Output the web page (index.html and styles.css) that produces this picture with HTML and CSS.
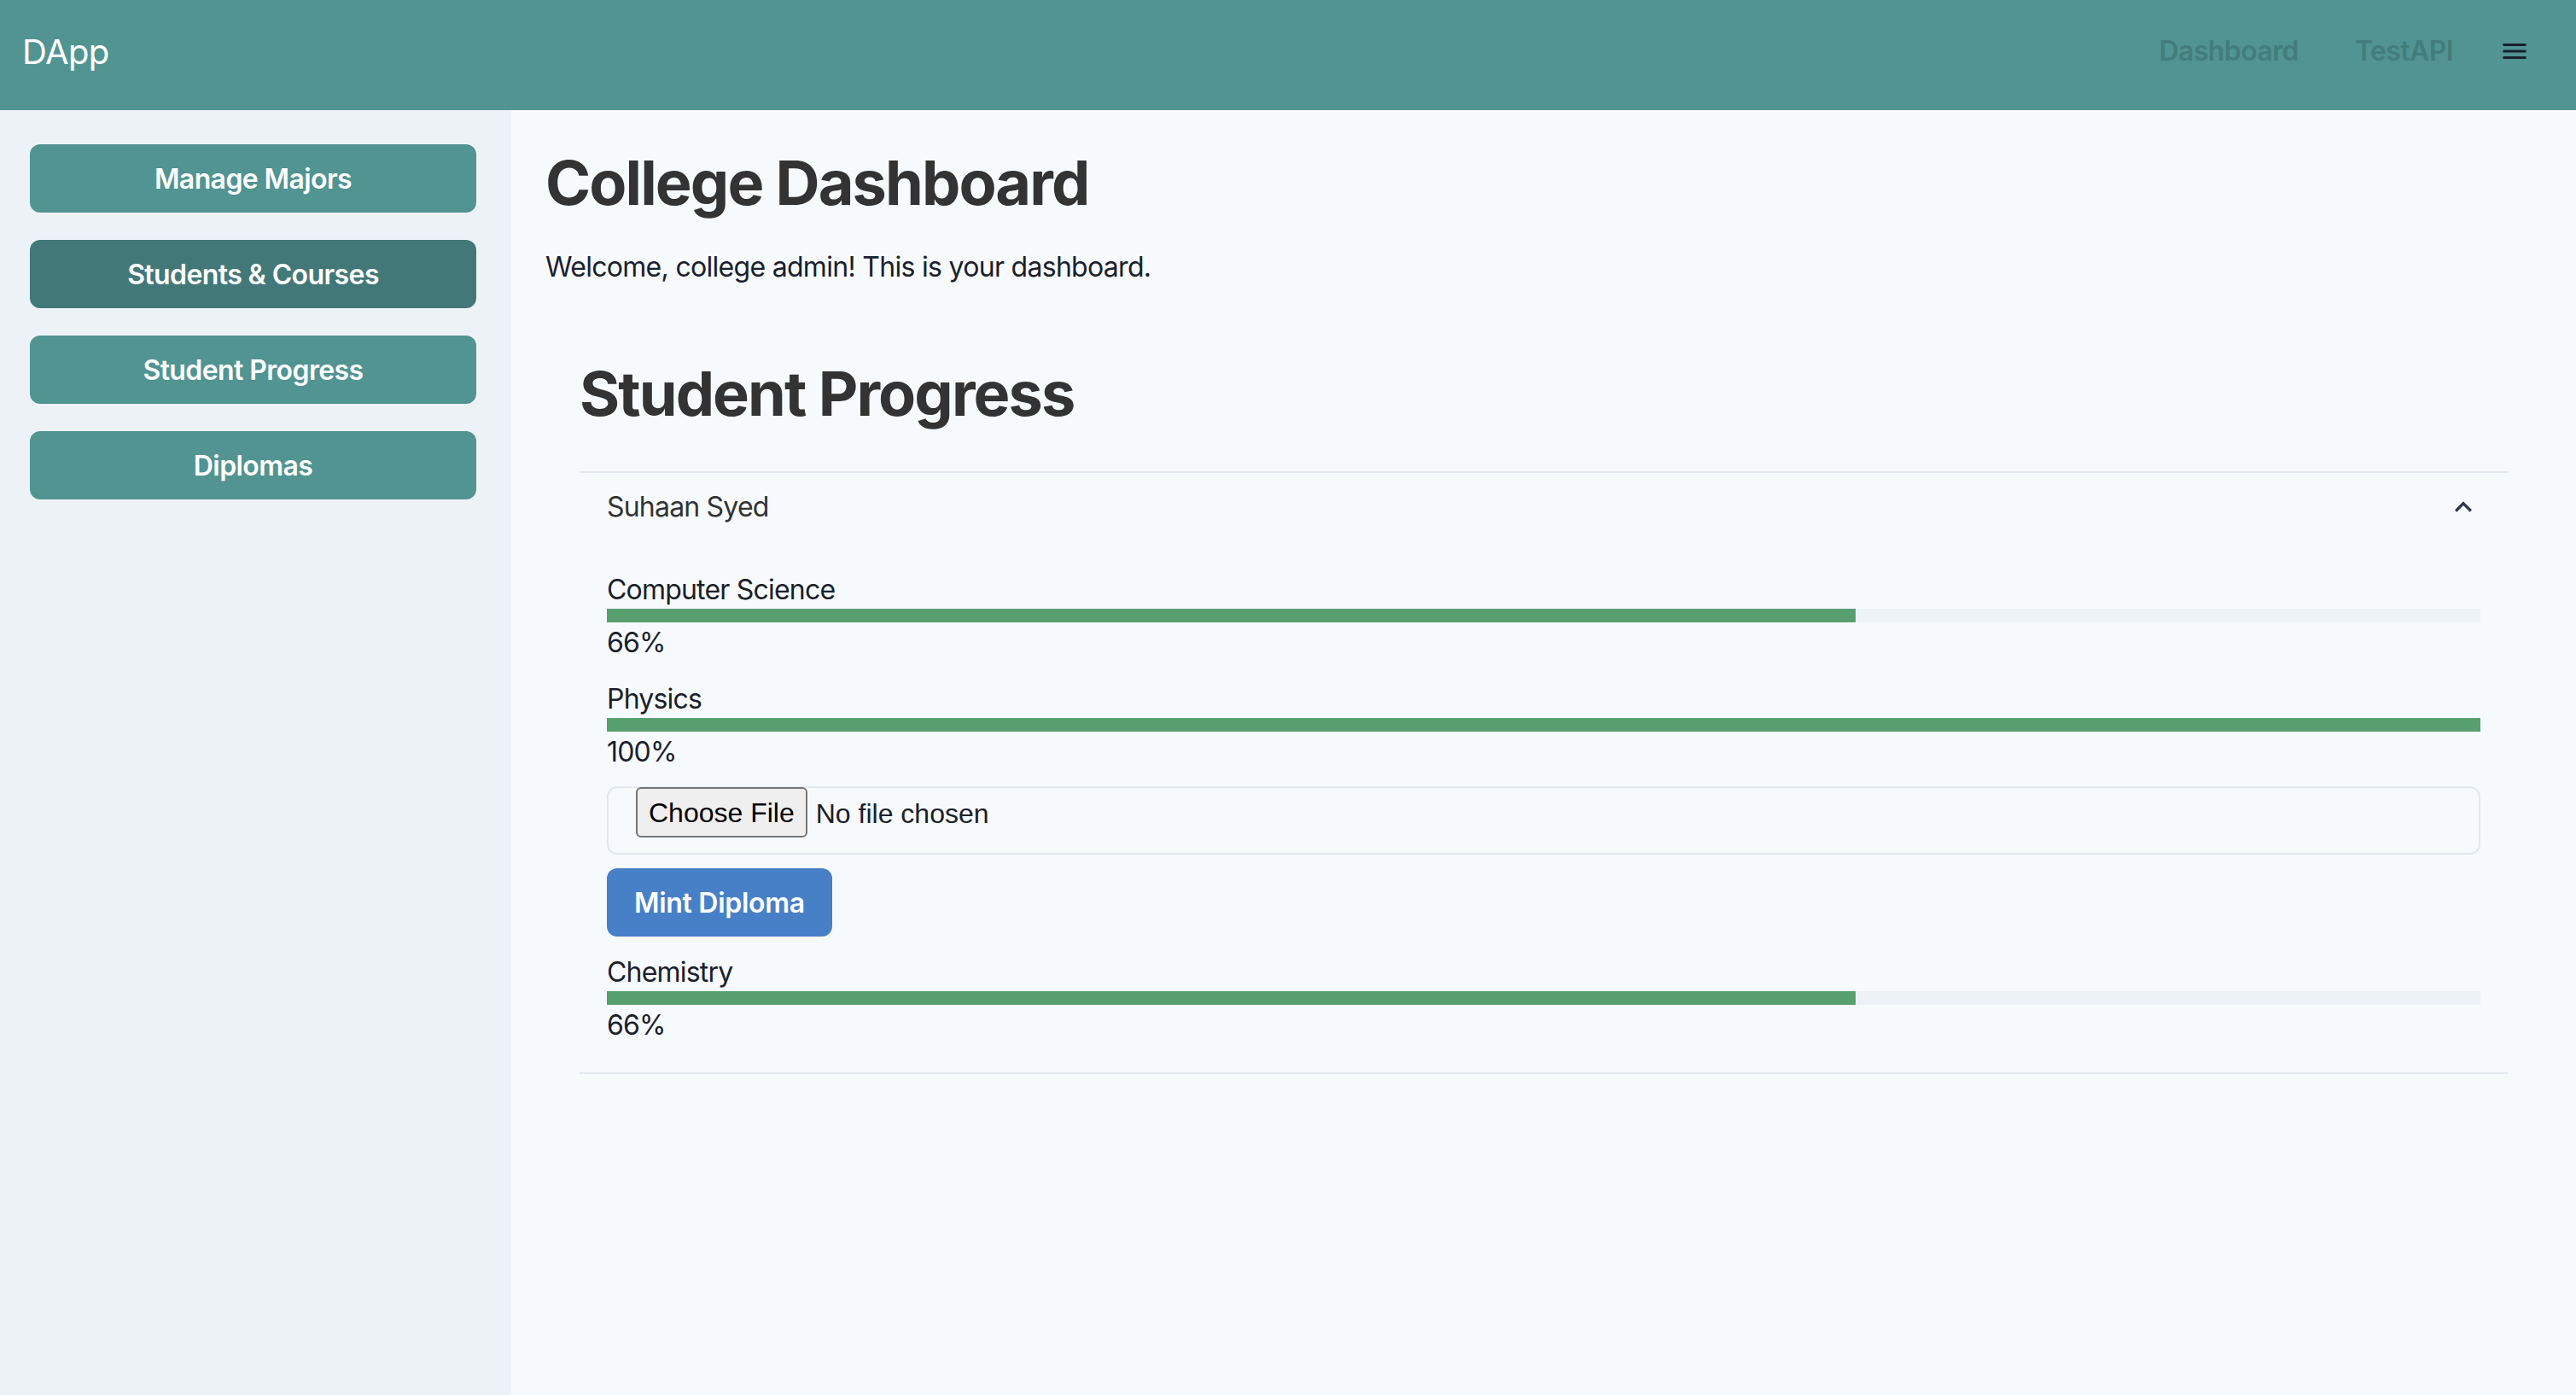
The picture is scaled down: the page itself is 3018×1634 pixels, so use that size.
FILE: index.html
```html
<!DOCTYPE html>
<html lang="en">
<head>
<meta charset="utf-8">
<title>DApp</title>
<link rel="stylesheet" href="styles.css">
</head>
<body>
<header class="topbar">
  <div class="brand">DApp</div>
  <nav class="nav">
    <a class="nav-link">Dashboard</a>
    <a class="nav-link">TestAPI</a>
    <button class="menu-btn" aria-label="Menu">
      <svg class="menu-icon" viewBox="0 0 24 24"><path fill="currentColor" d="M3 18h18v-2H3v2zm0-5h18v-2H3v2zm0-7v2h18V6H3z"/></svg>
    </button>
  </nav>
</header>
<div class="layout">
  <aside class="sidebar">
    <button class="side-btn">Manage Majors</button>
    <button class="side-btn active">Students &amp; Courses</button>
    <button class="side-btn">Student Progress</button>
    <button class="side-btn">Diplomas</button>
  </aside>
  <main class="main">
    <h1 class="page-title">College Dashboard</h1>
    <p class="welcome">Welcome, college admin! This is your dashboard.</p>
    <section class="progress-section">
      <h2 class="section-title">Student Progress</h2>
      <div class="accordion">
        <div class="acc-item">
          <button class="acc-button">
            <span>Suhaan Syed</span>
            <svg class="chevron" viewBox="0 0 24 24"><path fill="currentColor" d="M7.41 15.41L12 10.83l4.59 4.58L18 14l-6-6-6 6z"/></svg>
          </button>
          <div class="acc-panel">
            <div class="course">
              <div class="course-name">Computer Science</div>
              <div class="bar"><div class="bar-fill" style="width:66.67%"></div></div>
              <div class="course-pct">66%</div>
            </div>
            <div class="course">
              <div class="course-name">Physics</div>
              <div class="bar"><div class="bar-fill" style="width:100%"></div></div>
              <div class="course-pct">100%</div>
            </div>
            <div class="file-input">
              <span class="file-btn">Choose File</span>
              <span class="file-text">No file chosen</span>
            </div>
            <button class="mint-btn">Mint Diploma</button>
            <div class="course">
              <div class="course-name">Chemistry</div>
              <div class="bar"><div class="bar-fill" style="width:66.67%"></div></div>
              <div class="course-pct">66%</div>
            </div>
          </div>
        </div>
      </div>
    </section>
  </main>
</div>
</body>
</html>
```

FILE: styles.css
```css
* {
  box-sizing: border-box;
}

html, body {
  margin: 0;
  padding: 0;
}

body {
  font-family: Inter, "Noto Sans", "Liberation Sans", sans-serif;
  background: #f7fafc;
  color: #1a202c;
  min-height: 100vh;
}

.topbar {
  height: 129px;
  background: #519492;
  display: flex;
  align-items: center;
  justify-content: space-between;
  padding: 0 54px 0 26px;
}

.brand {
  color: #ffffff;
  font-size: 40px;
  font-weight: 400;
  line-height: 48px;
  letter-spacing: -0.6px;
  margin-top: -8px;
}

.nav {
  display: flex;
  align-items: center;
  margin-top: -10px;
}

.nav-link {
  color: #437d7b;
  font-size: 32px;
  font-weight: 600;
  line-height: 48px;
  letter-spacing: -0.6px;
  text-decoration: none;
}

.nav-link + .nav-link {
  margin-left: 66px;
}

.menu-btn {
  margin-left: 54px;
  background: transparent;
  border: 0;
  padding: 0;
  width: 36px;
  height: 36px;
  color: #1a202c;
  display: flex;
}

.menu-icon {
  width: 36px;
  height: 36px;
}

.layout {
  display: flex;
  min-height: calc(100vh - 129px);
}

.sidebar {
  width: 599px;
  flex: 0 0 599px;
  background: #edf2f7;
  padding: 40px 41px 40px 35px;
  display: flex;
  flex-direction: column;
  gap: 32px;
}

.side-btn {
  height: 80px;
  border: 0;
  border-radius: 12px;
  background: #519492;
  color: #ffffff;
  font-family: Inter, "Noto Sans", sans-serif;
  font-size: 32px;
  font-weight: 600;
  letter-spacing: -0.6px;
  padding-top: 2px;
}

.side-btn.active {
  background: #437878;
}

.main {
  flex: 1;
  padding: 42px 40px 40px;
}

.page-title {
  margin: 0 0 32px;
  font-size: 72px;
  font-weight: 700;
  line-height: 1.2;
  letter-spacing: -1.9px;
  color: #333333;
}

.welcome {
  margin: 0;
  font-size: 32px;
  line-height: 48px;
  letter-spacing: -0.7px;
  color: #1a202c;
}

.progress-section {
  padding: 81px 40px 0;
}

.section-title {
  margin: 0 0 47px;
  font-size: 72px;
  font-weight: 700;
  line-height: 1.2;
  letter-spacing: -1.9px;
  color: #333333;
}

.acc-item {
  border-top: 2px solid #e2e8f0;
  border-bottom: 2px solid #e2e8f0;
}

.acc-button {
  width: 100%;
  display: flex;
  align-items: center;
  justify-content: space-between;
  padding: 16px 32px;
  background: transparent;
  border: 0;
  font-family: Inter, "Noto Sans", sans-serif;
  font-size: 32px;
  line-height: 48px;
  letter-spacing: -0.8px;
  color: #333333;
  text-align: left;
}

.chevron {
  width: 40px;
  height: 40px;
  color: #2d3748;
}

.acc-panel {
  padding: 31px 32px 31px;
  display: flex;
  flex-direction: column;
  gap: 16px;
}

.course-name,
.course-pct {
  font-size: 32px;
  line-height: 48px;
  letter-spacing: -0.8px;
  color: #1a202c;
}

.course-name {
  padding-top: 2px;
  margin-bottom: -2px;
}

.bar {
  height: 16px;
  background: #edf2f7;
}

.bar-fill {
  height: 100%;
  background: #589f70;
}

.file-input {
  height: 80px;
  border: 2px solid #e2e8f0;
  border-radius: 12px;
  padding: 0 32px;
  display: flex;
  align-items: flex-start;
}

.file-btn {
  font-family: "Liberation Sans", Arial, sans-serif;
  font-size: 32px;
  height: 59px;
  line-height: 57px;
  padding: 0 13px;
  margin-top: -1px;
  background: #efefef;
  border: 2px solid #767676;
  border-radius: 6px;
  color: #000000;
}

.file-text {
  font-family: "Liberation Sans", Arial, sans-serif;
  font-size: 32px;
  line-height: 60px;
  margin-left: 10px;
  color: #1a202c;
}

.mint-btn {
  align-self: flex-start;
  height: 80px;
  padding: 2px 32px 0;
  border: 0;
  border-radius: 12px;
  background: #4880c8;
  color: #ffffff;
  font-family: Inter, "Noto Sans", sans-serif;
  font-size: 32px;
  font-weight: 600;
  letter-spacing: -0.3px;
}
```
